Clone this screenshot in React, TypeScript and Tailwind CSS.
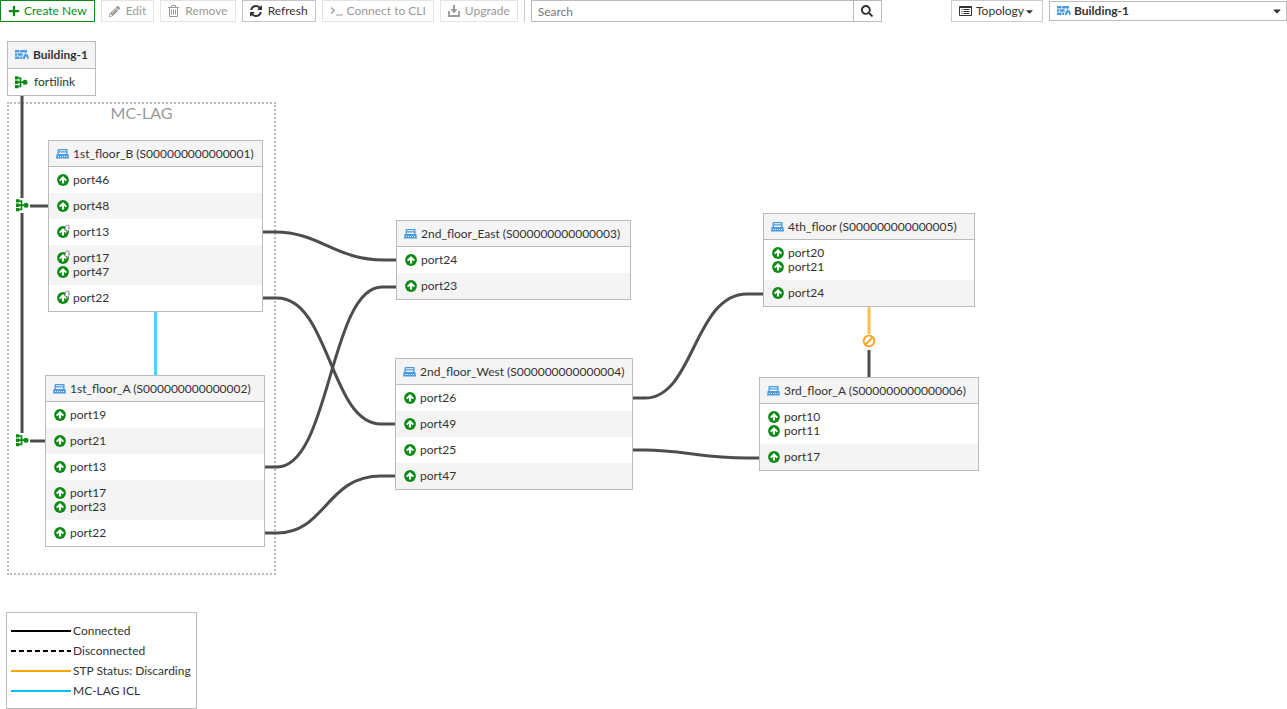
import React from "react";
import { FaPlus, FaPencilAlt, FaSearch, FaCaretDown } from "react-icons/fa";

interface Port {
  name: string;
  poe?: boolean;
}

interface SwitchNode {
  name: string;
  serial: string;
  place: string;
  // ports that share a row belong to the same trunk
  rows: Port[][];
}

const switches: SwitchNode[] = [
  {
    name: "1st_floor_B",
    serial: "S000000000000001",
    place: "left-[48px] top-[118px] w-[215px]",
    rows: [
      [{ name: "port46" }],
      [{ name: "port48" }],
      [{ name: "port13", poe: true }],
      [{ name: "port17", poe: true }, { name: "port47" }],
      [{ name: "port22", poe: true }],
    ],
  },
  {
    name: "1st_floor_A",
    serial: "S000000000000002",
    place: "left-[45px] top-[353px] w-[220px]",
    rows: [
      [{ name: "port19" }],
      [{ name: "port21" }],
      [{ name: "port13" }],
      [{ name: "port17" }, { name: "port23" }],
      [{ name: "port22" }],
    ],
  },
  {
    name: "2nd_floor_East",
    serial: "S000000000000003",
    place: "left-[396px] top-[198px] w-[235px]",
    rows: [[{ name: "port24" }], [{ name: "port23" }]],
  },
  {
    name: "2nd_floor_West",
    serial: "S000000000000004",
    place: "left-[395px] top-[336px] w-[238px]",
    rows: [
      [{ name: "port26" }],
      [{ name: "port49" }],
      [{ name: "port25" }],
      [{ name: "port47" }],
    ],
  },
  {
    name: "4th_floor",
    serial: "S000000000000005",
    place: "left-[763px] top-[191px] w-[212px]",
    rows: [[{ name: "port20" }, { name: "port21" }], [{ name: "port24" }]],
  },
  {
    name: "3rd_floor_A",
    serial: "S000000000000006",
    place: "left-[759px] top-[355px] w-[220px]",
    rows: [[{ name: "port10" }, { name: "port11" }], [{ name: "port17" }]],
  },
];

const links = [
  "M22 74V176",
  "M22 191V411",
  "M30 184H48",
  "M30 419H45",
  "M263 210H275C320 210 335 238 384 238H396",
  "M263 276H277C330 276 330 402 381 402H395",
  "M265 445H277C330 445 330 265 382 265H396",
  "M265 511H277C326 511 326 454 381 454H395",
  "M633 376H645C694 376 694 272 747 272H763",
  "M633 428H645C680 428 704 436 747 436H759",
  "M869 328V355",
];

const legend = [
  { label: "Connected", stroke: "#000" },
  { label: "Disconnected", stroke: "#000", dash: "5 3" },
  { label: "STP Status: Discarding", stroke: "#ffa500" },
  { label: "MC-LAG ICL", stroke: "#00bfff" },
];

function FirewallIcon() {
  return (
    <svg width="14" height="12" viewBox="0 0 14 12" className="shrink-0" aria-hidden="true">
      <g fill="#4a9be0">
        <path d="M0 1h4.500v2.600H0zM5.200 1H12v2.600H5.200zM0 4.300h2v2.400H0zM2.700 4.300h5v2.400h-5zM0 7.400h4.500V10H0zM5.200 7.400h2V10h-2z" />
        <path d="M10 3.300c1.300 1 .6 2 1.500 2.600.4-.5.4-1 .3-1.500C13.200 5.500 14 7.500 13.600 10h-1.400c.2-1.200-.5-2.200-1.300-3-.1 1-.9 1.800-.8 3H8.200C7.600 8 8.300 7 9.200 6c.7-.8 1-1.600.8-2.700z" />
      </g>
    </svg>
  );
}

function SwitchIcon() {
  return (
    <svg width="13" height="12" viewBox="0 0 13 12" className="shrink-0" aria-hidden="true">
      <path
        d="M2.200 1.600h8.600v4.900M2.200 1.600v4.900M3 3.900h7"
        fill="none"
        stroke="#4a9be0"
        strokeWidth="1.400"
      />
      <path d="M.6 6h11.800l.6 4.500H0z" fill="#4a9be0" />
      <path d="M2 8.500h1M4 8.500h1M6 8.500h1M8 8.500h1M10 8.500h1" stroke="#f4f4f4" />
    </svg>
  );
}

function TrunkGlyph() {
  return (
    <g>
      <path d="M1.500 2h4v8.500h-4M1.500 6.200h8" fill="none" stroke="#0a8a14" strokeWidth="1.7" />
      <circle cx="10" cy="6.200" r="2.500" fill="#0a8a14" />
      <path d="M0 .3h3.300v3.300H0zM0 4.600h3.300v3.300H0zM0 8.900h3.300v3.300H0z" fill="#0a8a14" />
    </g>
  );
}

function PortIcon({ poe }: { poe?: boolean }) {
  return (
    <svg width="12" height="12" viewBox="0 0 12 12" className="shrink-0 overflow-visible" aria-hidden="true">
      <circle cx="6" cy="6" r="5.900" fill="#0a8a14" />
      <path d="M6 2 10 6 8.800 7.200 7.100 5.700V9.600H4.900V5.700L3.200 7.200 2 6z" fill="#fff" />
      {poe && (
        <path
          d="M9-.8h3.200L11.300 2h1.700L8.600 8l1.200-4H7.600z"
          fill="#fff"
          stroke="#777"
          strokeWidth="0.7"
        />
      )}
    </svg>
  );
}

function SwitchCard({ node }: { node: SwitchNode }) {
  return (
    <section className={`absolute border border-[#bbb] bg-white ${node.place}`}>
      <h2 className="flex h-[26px] items-center gap-1 border-b border-[#bbb] bg-[#f4f4f4] pl-[7px] whitespace-nowrap">
        <SwitchIcon />
        {node.name} ({node.serial})
      </h2>
      <ul>
        {node.rows.map((ports) => (
          <li key={ports[0].name} className="py-1.5 pl-2 even:bg-[#f4f4f4]">
            {ports.map((port) => (
              <div key={port.name} className="flex items-center gap-1 leading-[14px]">
                <PortIcon poe={port.poe} />
                {port.name}
              </div>
            ))}
          </li>
        ))}
      </ul>
    </section>
  );
}

function Toolbar() {
  const button = "flex h-[22px] items-center border px-[7px] whitespace-nowrap";
  const disabled = "border-[#e4e4e4] text-[#999]";

  return (
    <header className="flex items-center gap-1.5">
      <button className={`${button} gap-1 border-[#0a8a14] text-[#0a8a14]`}>
        <FaPlus size={12} />
        Create New
      </button>
      <button disabled className={`${button} gap-1.5 ${disabled}`}>
        <FaPencilAlt size={11} />
        Edit
      </button>
      <button disabled className={`${button} gap-1.5 ${disabled}`}>
        <svg width="11" height="12" viewBox="0 0 11 12" fill="none" stroke="currentColor" aria-hidden="true">
          <path d="M0 2.500h11M3.500 2.500v-2h4v2M1.500 2.500v9h8v-9M3.500 4.500v5M5.500 4.500v5M7.500 4.500v5" />
        </svg>
        Remove
      </button>
      <button className={`${button} gap-1.5 border-[#c4c4c4]`}>
        <svg width="12" height="12" viewBox="0 0 1536 1536" fill="currentColor" aria-hidden="true">
          <path d="M1511 928q0 5-1 7-64 268-268 434.500T764 1536q-146 0-282.500-55T238 1324l-129 129q-19 19-45 19t-45-19-19-45V960q0-26 19-45t45-19h448q26 0 45 19t19 45-19 45l-137 137q71 66 161 102t187 36q134 0 250-65t186-179q11-17 53-117 8-23 30-23h192q13 0 22.500 9.500t9.500 22.500zm25-800v448q0 26-19 45t-45 19h-448q-26 0-45-19t-19-45 19-45l138-138q-148-137-349-137-134 0-250 65T332 500q-11 17-53 117-8 23-30 23H50q-13 0-22.500-9.500T18 608v-7q65-268 270-434.500T768 0q146 0 284 55.500T1297 212l130-129q19-19 45-19t45 19 19 45z" />
        </svg>
        Refresh
      </button>
      <button disabled className={`${button} gap-1 ${disabled}`}>
        <svg width="13" height="10" viewBox="0 0 13 10" fill="none" stroke="currentColor" strokeWidth="1.2" aria-hidden="true">
          <path d="M1 1.500 4.500 4.500 1 7.500M6 9h7" />
        </svg>
        Connect to CLI
      </button>
      <button disabled className={`${button} gap-[5px] ${disabled}`}>
        <svg width="12" height="12" viewBox="0 0 12 12" aria-hidden="true">
          <path d="M1 6v5h10V6" fill="none" stroke="currentColor" strokeWidth="1.8" />
          <path d="M5 0h2v4h2.500L6 8.500 2.500 4H5z" fill="currentColor" />
        </svg>
        Upgrade
      </button>
      <div className="h-[22px] border-l border-[#ccc]" />
      <form className="flex" role="search" onSubmit={(e) => e.preventDefault()}>
        <input
          type="text"
          placeholder="Search"
          aria-label="Search"
          className="h-[22px] w-[323px] border border-[#bbb] px-1.5 placeholder:text-[#777]"
        />
        <button
          aria-label="Search"
          className="flex h-[22px] w-7 items-center justify-center border border-l-0 border-[#bbb]"
        >
          <FaSearch size={12} />
        </button>
      </form>
      <button className={`${button} ml-auto gap-1 border-[#ccc]`}>
        <svg width="13" height="12" viewBox="0 0 13 12" fill="none" stroke="currentColor" aria-hidden="true">
          <path d="M.5 1.500h12v9H.5zM.5 2.500h12M2.500 4.500h1M4.500 4.500h6M2.500 6.500h1M4.500 6.500h6M2.500 8.500h1M4.500 8.500h6" />
        </svg>
        <span className="flex items-center">
          Topology
          <FaCaretDown size={11} />
        </span>
      </button>
      <div className="relative w-[238px]">
        <span className="pointer-events-none absolute top-1 left-2">
          <FirewallIcon />
        </span>
        <select
          aria-label="FortiGate"
          className="block h-5 w-full appearance-none border border-[#bbb] bg-white pl-6 font-bold"
        >
          <option>Building-1</option>
        </select>
        <FaCaretDown size={12} className="pointer-events-none absolute top-1 right-1" />
      </div>
    </header>
  );
}

function Topology() {
  return (
    <main className="relative h-[590px]">
      <div className="absolute top-20 left-[7px] h-[473px] w-[269px] border-2 border-dotted border-[#bbb] text-center text-base leading-[18px] text-[#999]">
        MC-LAG
      </div>

      <svg className="absolute top-0 left-0 h-full w-full" aria-hidden="true">
        <g fill="none" stroke="#4d4d4d" strokeWidth="3">
          {links.map((d) => (
            <path key={d} d={d} />
          ))}
        </g>
        <path d="M155.500 290V353" stroke="#55ceff" strokeWidth="3" />
        <path d="M869 285V312" stroke="#ffc04d" strokeWidth="3" />
        <g fill="none" stroke="#ffa01e" strokeWidth="1.800">
          <circle cx="869" cy="319" r="5.300" />
          <path d="M865.500 322.500 872.500 315.500" />
        </g>
        <g transform="translate(16 177)">
          <TrunkGlyph />
        </g>
        <g transform="translate(16 412)">
          <TrunkGlyph />
        </g>
      </svg>

      <section className="absolute top-[19px] left-[7px] w-[89px] border border-[#bbb] bg-white">
        <h2 className="flex h-[27px] items-center gap-1 border-b border-[#bbb] bg-[#f4f4f4] pl-[7px] font-bold">
          <FirewallIcon />
          Building-1
        </h2>
        <div className="flex h-[26px] items-center gap-1.5 pl-[7px]">
          <svg width="13" height="13" viewBox="0 0 13 13" aria-hidden="true">
            <TrunkGlyph />
          </svg>
          fortilink
        </div>
      </section>

      {switches.map((node) => (
        <SwitchCard key={node.name} node={node} />
      ))}
    </main>
  );
}

function Legend() {
  return (
    <ul className="ml-1.5 w-fit border border-[#bbb] pt-2 pr-[5px] pb-[7px] pl-1">
      {legend.map((item) => (
        <li key={item.label} className="flex items-center gap-0.5 leading-5">
          <svg width="60" height="2" aria-hidden="true">
            <path d="M0 1H60" stroke={item.stroke} strokeWidth="2" strokeDasharray={item.dash} />
          </svg>
          {item.label}
        </li>
      ))}
    </ul>
  );
}

export default function App() {
  return (
    <div className="min-h-full bg-white font-['Lato',sans-serif] text-xs text-[#333]">
      <Toolbar />
      <Topology />
      <Legend />
    </div>
  );
}
